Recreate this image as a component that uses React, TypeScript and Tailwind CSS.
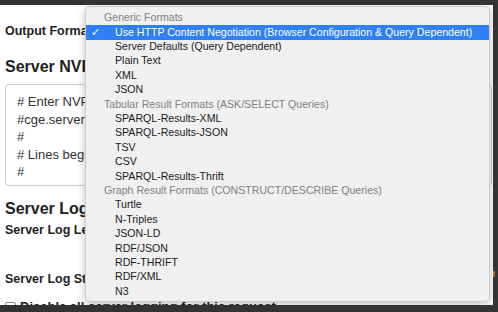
import { Fragment } from "react";

type Group = {
  label: string;
  items: string[];
};

const groups: Group[] = [
  {
    label: "Generic Formats",
    items: [
      "Use HTTP Content Negotiation (Browser Configuration & Query Dependent)",
      "Server Defaults (Query Dependent)",
      "Plain Text",
      "XML",
      "JSON",
    ],
  },
  {
    label: "Tabular Result Formats (ASK/SELECT Queries)",
    items: ["SPARQL-Results-XML", "SPARQL-Results-JSON", "TSV", "CSV", "SPARQL-Results-Thrift"],
  },
  {
    label: "Graph Result Formats (CONSTRUCT/DESCRIBE Queries)",
    items: ["Turtle", "N-Triples", "JSON-LD", "RDF/JSON", "RDF-THRIFT", "RDF/XML", "N3"],
  },
];

const selected = "Use HTTP Content Negotiation (Browser Configuration & Query Dependent)";

const nvpLines = [
  "# Enter NVP overrides, one per line",
  "#cge.server.QueryLogLevel=debug",
  "#",
  "# Lines beginning with # are ignored",
  "#",
  "# More examples",
];

function FormatMenu() {
  return (
    <div className="absolute left-[85px] top-[1px] w-[405px] h-[296px] rounded-[5px] border border-[#cdcdcd] bg-[#f0f0f0] py-[4px] shadow-[0_2px_8px_rgba(0,0,0,0.25)] text-[10.6px] font-['Liberation_Sans',Arial,sans-serif]">
      {groups.map((g) => (
        <Fragment key={g.label}>
          <div className="flex h-[14.4px] items-center pl-[18px] text-[#808080]">{g.label}</div>
          {g.items.map((item) => {
            const active = item === selected;
            return (
              <div
                key={item}
                className={
                  active
                    ? "flex h-[14.4px] items-center bg-[#2f80f6] text-white"
                    : "flex h-[14.4px] items-center text-[#1a1a1a]"
                }
              >
                <span className="w-[29px] pl-[5px] text-[11px]">{active ? "✓" : ""}</span>
                <span className="whitespace-nowrap">{item}</span>
              </div>
            );
          })}
        </Fragment>
      ))}
    </div>
  );
}

export default function App() {
  return (
    <div className="flex h-[312px] w-[498px] flex-col bg-[#333] overflow-hidden">
      <div className="h-[5px] shrink-0" />
      <div className="flex h-[300px] shrink-0">
        <div className="relative flex-1 overflow-hidden bg-white pl-[5px] text-[#222] font-['Liberation_Sans',Arial,sans-serif]">
          <div className="mt-[18px] text-[12.5px] font-bold leading-[16px]">Output Format:</div>
          <div className="mt-[18px] text-[16px] font-bold leading-[20px]">Server NVP Overrides</div>
          <div className="mt-[7px] mr-[1px] h-[102px] overflow-hidden rounded-[4px] border border-[#ccc] pl-[11px] pt-[8px] text-[13px] leading-[17.5px] text-[#333]">
            {nvpLines.map((l, i) => (
              <div key={i}>{l}</div>
            ))}
          </div>
          <div className="mt-[13px] text-[16px] font-bold leading-[20px]">Server Log Options</div>
          <div className="mt-[3px] text-[12.5px] font-bold leading-[16px]">Server Log Level:</div>
          <div className="mt-[33px] text-[12.5px] font-bold leading-[16px]">Server Log Stats:</div>
          <div className="mt-[12px] flex items-center gap-[4px] text-[13px] font-bold leading-[16px]">
            <span className="inline-block h-[11px] w-[11px] rounded-[2px] border border-[#888]" />
            Disable all server logging for this request
          </div>
          <FormatMenu />
        </div>
        <div className="relative w-[5px] shrink-0">
          <div className="absolute left-0 top-[266px] h-[6px] w-[2px] bg-[#b5651d]" />
        </div>
      </div>
    </div>
  );
}
